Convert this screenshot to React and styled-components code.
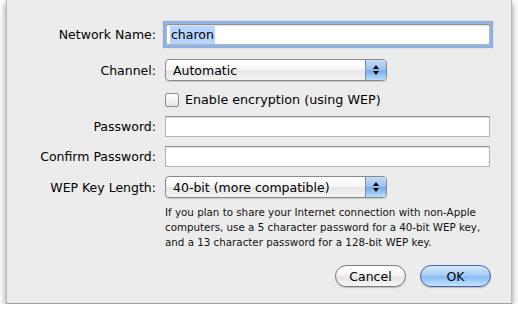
import React from 'react';
import styled, { createGlobalStyle } from 'styled-components';


const GlobalStyle = createGlobalStyle`
    html, body {
        background: #fff;
        margin: 0;
        padding: 0;
    }

    body {
        font-family: "DejaVu Sans", "Liberation Sans", sans-serif;
        color: #000;
    }
`;

const Sheet = styled.div`
    background: #ececec;
    border-bottom: 1px solid #9e9e9e;
    border-left: 1px solid #b9b9b9;
    border-right: 1px solid #b9b9b9;
    box-shadow: 0 3px 7px rgba(0, 0, 0, 0.45);
    box-sizing: border-box;
    height: 304px;
    margin-left: 6px;
    padding: 24px 20px 0 0;
    width: 506px;
`;

const Form = styled.div`
    display: grid;
    grid-template-columns: 149px 1fr;
    column-gap: 9px;
`;

const Label = styled.label`
    align-self: center;
    font-size: 12.5px;
    margin-top: ${ props => props.top || 0 }px;
    text-align: right;
    white-space: nowrap;
`;

const Cell = styled.div`
    display: flex;
    margin-top: ${ props => props.top || 0 }px;
`;

const TextField = styled.div`
    background: #fff;
    border: 1px solid #b4b4b4;
    border-top-color: #8f8f8f;
    box-shadow: inset 0 1px 1px rgba(0, 0, 0, 0.12)${ props => props.focused ? ', 0 0 0 1px #98b6de, 0 0 1px 3px #8ab0e6' : '' };
    box-sizing: border-box;
    display: flex;
    align-items: center;
    font-size: 12.5px;
    height: 21px;
    padding: 0 3px;
    width: ${ props => props.focused ? 324 : 325 }px;
    margin-left: ${ props => props.focused ? 1 : 0 }px;
`;

const Selection = styled.span`
    background: #b5d5ff;
    padding: 1px 1px 2px;
`;

const Popup = styled.div`
    align-items: center;
    background: linear-gradient(#ffffff 0%, #f7f7f7 45%, #e6e6e6 55%, #f4f4f4 100%);
    border: 1px solid #8a8a8a;
    border-radius: 4px;
    box-shadow: 0 1px 1px rgba(0, 0, 0, 0.15);
    box-sizing: border-box;
    display: flex;
    font-size: 12.5px;
    height: 22px;
    overflow: hidden;
    width: 222px;
`;

const PopupText = styled.span`
    flex: 1;
    padding-left: 7px;
    white-space: nowrap;
`;

const Stepper = styled.div`
    align-items: center;
    align-self: stretch;
    background: linear-gradient(#c6dcf6 0%, #9cc2ef 45%, #78aceb 55%, #b9e0fb 100%);
    border-left: 1px solid #7c8fb4;
    display: flex;
    justify-content: center;
    width: 20px;
`;

const Checkbox = styled.span`
    background: linear-gradient(#ffffff, #e4e4e4);
    border: 1px solid #8c8c8c;
    border-radius: 2px;
    box-sizing: border-box;
    display: inline-block;
    height: 14px;
    margin-right: 6px;
    width: 14px;
`;

const CheckLabel = styled.label`
    align-items: center;
    display: flex;
    font-size: 12.7px;
`;

const Help = styled.p`
    color: #111;
    font-size: 10.3px;
    line-height: 15px;
    margin: 0;
    white-space: nowrap;
`;

const Actions = styled.div`
    display: flex;
    gap: 14px;
    justify-content: flex-end;
    margin-top: 15px;
    padding-right: 0;
`;

const PushButton = styled.button`
    background: ${ props => props.primary
        ? 'linear-gradient(#d7e8fb 0%, #a6cdf6 45%, #86bdf4 55%, #c3e5fd 100%)'
        : 'linear-gradient(#ffffff 0%, #f5f5f5 45%, #e5e5e5 55%, #f7f7f7 100%)' };
    border: 1px solid ${ props => props.primary ? '#4f5fa8' : '#7d7d7d' };
    border-radius: 11px;
    box-shadow: 0 1px 1px rgba(0, 0, 0, 0.2);
    color: #000;
    font-family: inherit;
    font-size: 12.5px;
    height: 22px;
    padding: 0;
    width: 71px;
`;


/**
 * Up and down arrows of a pop-up button.
 *
 * @returns {ReactElement}
 */
function Arrows() {
    return (
        <svg height = '12' viewBox = '0 0 8 12' width = '8'>
            <path d = 'M4 1 L7 5 L1 5 Z' fill = '#000' />
            <path d = 'M4 11 L7 7 L1 7 Z' fill = '#000' />
        </svg>
    );
}


/**
 * Network settings sheet.
 *
 * @returns {ReactElement}
 */
export default function App() {
    return (
        <>
            <GlobalStyle />
            <Sheet>
                <Form>
                    <Label>Network Name:</Label>
                    <Cell>
                        <TextField focused = { true }>
                            <Selection>charon</Selection>
                        </TextField>
                    </Cell>

                    <Label top = { 14 }>Channel:</Label>
                    <Cell top = { 14 }>
                        <Popup>
                            <PopupText>Automatic</PopupText>
                            <Stepper><Arrows /></Stepper>
                        </Popup>
                    </Cell>

                    <span />
                    <Cell top = { 11 }>
                        <CheckLabel>
                            <Checkbox />
                            Enable encryption (using WEP)
                        </CheckLabel>
                    </Cell>

                    <Label top = { 9 }>Password:</Label>
                    <Cell top = { 9 }>
                        <TextField />
                    </Cell>

                    <Label top = { 9 }>Confirm Password:</Label>
                    <Cell top = { 9 }>
                        <TextField />
                    </Cell>

                    <Label top = { 9 }>WEP Key Length:</Label>
                    <Cell top = { 9 }>
                        <Popup>
                            <PopupText>40-bit (more compatible)</PopupText>
                            <Stepper><Arrows /></Stepper>
                        </Popup>
                    </Cell>

                    <span />
                    <Cell top = { 7 }>
                        <Help>
                            If you plan to share your Internet connection with non-Apple<br />
                            computers, use a 5 character password for a 40-bit WEP key,<br />
                            and a 13 character password for a 128-bit WEP key.
                        </Help>
                    </Cell>
                </Form>
                <Actions>
                    <PushButton type = 'button'>Cancel</PushButton>
                    <PushButton primary = { true } type = 'button'>OK</PushButton>
                </Actions>
            </Sheet>
        </>
    );
}
